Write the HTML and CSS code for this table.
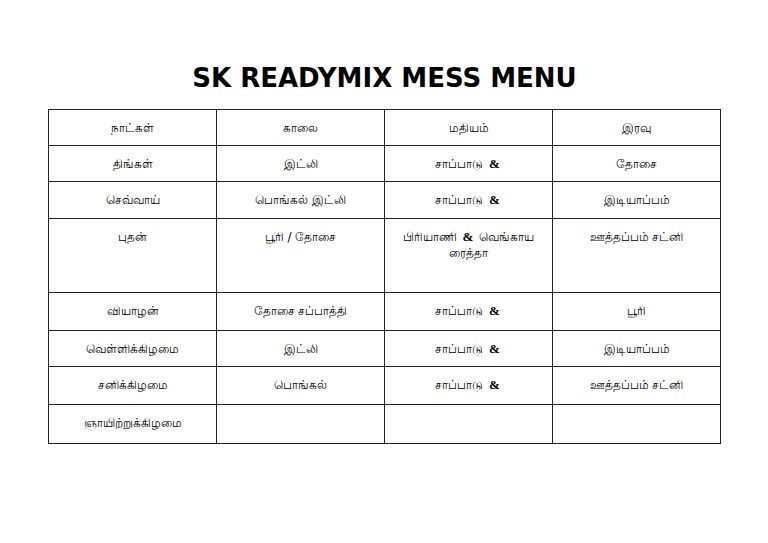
FILE: index.html
```html
<!DOCTYPE html>
<html lang="ta">
<head>
<meta charset="utf-8">
<title>SK READYMIX MESS MENU</title>
<link rel="stylesheet" href="styles.css">
</head>
<body>
<div class="page">
  <h1 class="title">SK READYMIX MESS MENU</h1>
  <table class="menu">
    <tr class="r1">
      <td>நாட்கள்</td>
      <td>காலை</td>
      <td>மதியம்</td>
      <td>இரவு</td>
    </tr>
    <tr class="r2">
      <td>திங்கள்</td>
      <td>இட்லி</td>
      <td>சாப்பாடு <b class="amp">&amp;</b></td>
      <td>தோசை</td>
    </tr>
    <tr class="r3">
      <td>செவ்வாய்</td>
      <td>பொங்கல் இட்லி</td>
      <td>சாப்பாடு <b class="amp">&amp;</b></td>
      <td>இடியாப்பம்</td>
    </tr>
    <tr class="r4">
      <td>புதன்</td>
      <td>பூரி / தோசை</td>
      <td>பிரியாணி <b class="amp">&amp;</b> வெங்காய ரைத்தா</td>
      <td>ஊத்தப்பம் சட்னி</td>
    </tr>
    <tr class="r5">
      <td>வியாழன்</td>
      <td>தோசை சப்பாத்தி</td>
      <td>சாப்பாடு <b class="amp">&amp;</b></td>
      <td>பூரி</td>
    </tr>
    <tr class="r6">
      <td>வெள்ளிக்கிழமை</td>
      <td>இட்லி</td>
      <td>சாப்பாடு <b class="amp">&amp;</b></td>
      <td>இடியாப்பம்</td>
    </tr>
    <tr class="r7">
      <td>சனிக்கிழமை</td>
      <td>பொங்கல்</td>
      <td>சாப்பாடு <b class="amp">&amp;</b></td>
      <td>ஊத்தப்பம் சட்னி</td>
    </tr>
    <tr class="r8">
      <td>ஞாயிற்றுக்கிழமை</td>
      <td></td>
      <td></td>
      <td></td>
    </tr>
  </table>
</div>
</body>
</html>
```

FILE: styles.css
```css
html, body {
  margin: 0;
  padding: 0;
  background: #ffffff;
}

.page {
  padding: 63px 47px 0 48px;
  font-family: "DejaVu Sans", sans-serif;
  color: #000;
}

.title {
  margin: 0 0 15px 0;
  text-align: center;
  font-family: "DejaVu Sans", sans-serif;
  font-weight: bold;
  font-size: 26px;
  line-height: 31px;
}

.menu {
  width: 673px;
  border-collapse: collapse;
  table-layout: fixed;
}

.menu td {
  border: 1px solid #222;
  text-align: center;
  vertical-align: top;
  font-size: 12px;
  line-height: 16px;
  padding: 10px 6px 0 6px;
  width: 25%;
}

.amp {
  display: inline-block;
  font-family: "Liberation Serif", serif;
  font-weight: bold;
  font-size: 13px;
  line-height: 16px;
  margin: 0 2px;
}

.r1 td { height: 25px; }
.r2 td { height: 25px; }
.r3 td { height: 26px; }
.r4 td { height: 63px; }
.r5 td { height: 27px; }
.r6 td { height: 25px; }
.r7 td { height: 27px; }
.r8 td { height: 28px; }
```
